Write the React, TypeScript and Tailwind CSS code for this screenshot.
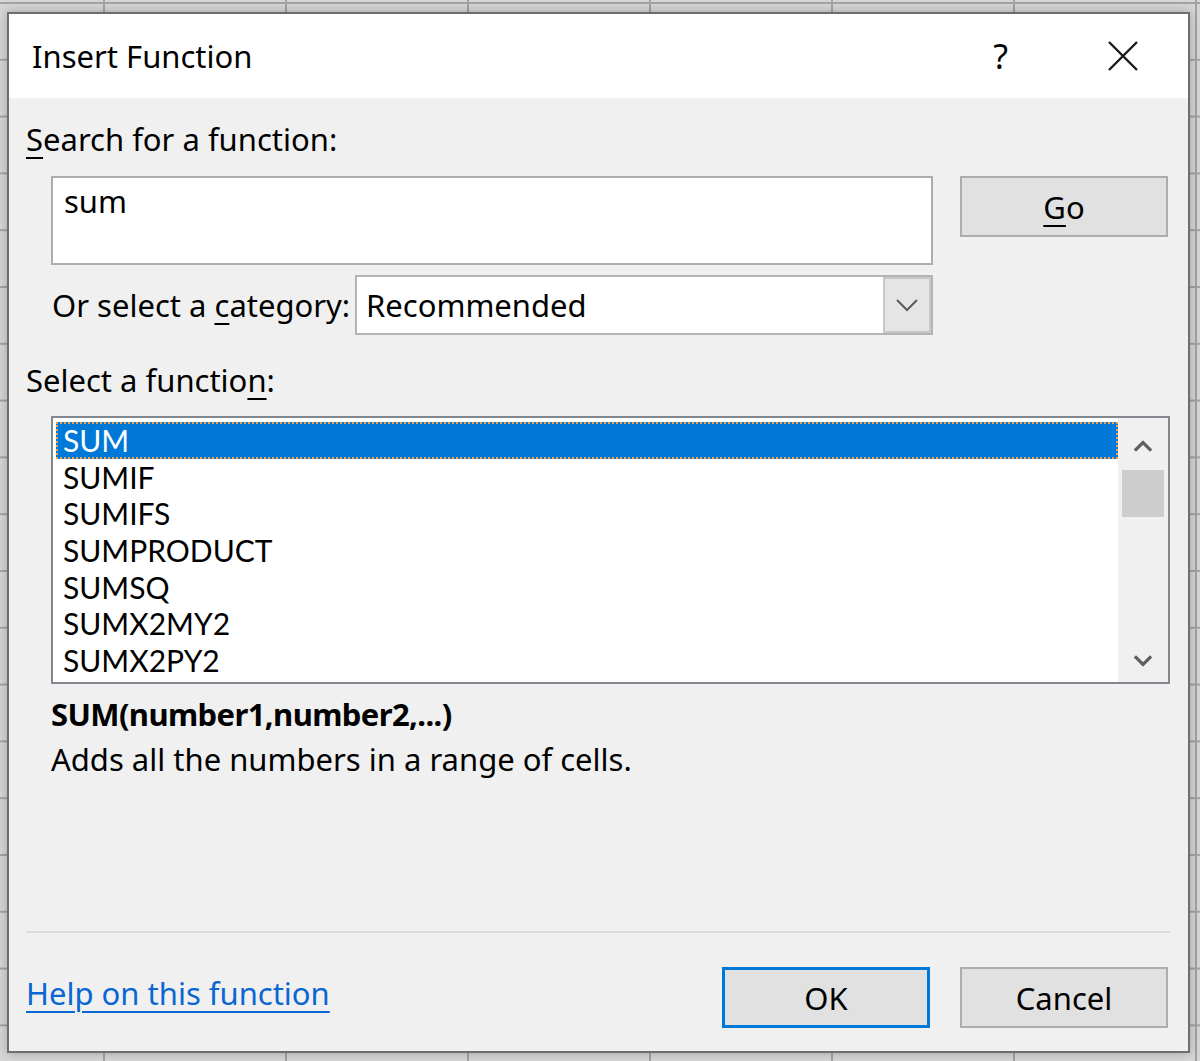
import { useState } from "react";

const FUNCS = ["SUM", "SUMIF", "SUMIFS", "SUMPRODUCT", "SUMSQ", "SUMX2MY2", "SUMX2PY2"];

function Chevron({ dir, className }: { dir: "up" | "down"; className?: string }) {
  return (
    <svg viewBox="0 0 20 12" className={className} fill="none" stroke="currentColor" strokeWidth={3.2} strokeLinecap="square">
      {dir === "up" ? <path d="M3 10 L10 3 L17 10" /> : <path d="M3 2 L10 9 L17 2" />}
    </svg>
  );
}

export default function App() {
  const [selected, setSelected] = useState(0);

  return (
    <div
      className="relative h-[1061px] w-[1200px] overflow-hidden bg-[#d6d6d6] pl-[7px] pt-[12px] [background-image:linear-gradient(to_right,#a3a3a3_2px,transparent_2px),linear-gradient(to_bottom,#a3a3a3_2px,transparent_2px)] [background-position:103px_2px] [background-size:182px_56.8px]"
      style={{ fontFamily: '"Noto Sans", "Open Sans", sans-serif' }}
    >
      <div className="flex h-[1041px] w-[1183px] flex-col border-2 border-[#6e6e6e] bg-[#f0f0f0] text-black shadow-[0_0_10px_rgba(0,0,0,0.25)]">
        {/* title bar */}
        <div className="flex h-[84px] shrink-0 items-center bg-white pl-[23px]">
          <span className="flex-1 text-[31px] leading-none">Insert Function</span>
          <span className="mr-[100px] text-[34px] leading-none">?</span>
          <svg viewBox="0 0 30 30" className="mr-[50px] h-[30px] w-[30px]" stroke="#1a1a1a" strokeWidth={2.4}>
            <path d="M1 1 L29 29 M29 1 L1 29" />
          </svg>
        </div>

        {/* body */}
        <div className="flex flex-1 flex-col pl-[17px] pr-[18px] text-[31px] leading-[34px]">
          <div className="mt-[24px] h-[34px]">
            <span className="underline decoration-2 underline-offset-[6px]">S</span>earch for a function:
          </div>

          <div className="mt-[20px] flex items-start">
            <div className="ml-[25px] h-[89px] w-[882px] border-2 border-[#adadad] bg-white px-[11px] pt-[6px]">
              sum
            </div>
            <button className="ml-[27px] flex h-[61px] w-[208px] items-center justify-center border-2 border-[#adadad] bg-[#e1e1e1]">
              <span className="underline decoration-2 underline-offset-[6px]">G</span>o
            </button>
          </div>

          <div className="mt-[10px] flex h-[60px] items-center">
            <span className="ml-[26px] w-[303px]">
              Or select a <span className="underline decoration-2 underline-offset-[6px]">c</span>ategory:
            </span>
            <div className="flex h-[60px] w-[578px] border-2 border-[#b4b4b4] bg-white">
              <span className="flex-1 pl-[9px] leading-[56px]">Recommended</span>
              <div className="flex w-[48px] items-center justify-center border-2 border-[#c8c8c8] bg-[#e5e5e5]">
                <svg viewBox="0 0 24 14" className="h-[14px] w-[24px]" fill="none" stroke="#5a5a5a" strokeWidth={2}>
                  <path d="M2 2 L12 12 L22 2" />
                </svg>
              </div>
            </div>
          </div>

          <div className="mt-[28px] h-[34px]">
            Select a functio<span className="underline decoration-2 underline-offset-[6px]">n</span>:
          </div>

          <div className="ml-[25px] mt-[19px] flex h-[268px] w-[1119px] border-2 border-[#828790] bg-white">
            <div className="flex-1 pl-[3px] pt-[4px] font-['Lato',sans-serif] text-[30px]">
              {FUNCS.map((f, i) => (
                <div
                  key={f}
                  onClick={() => setSelected(i)}
                  className={
                    i === selected
                      ? "flex h-[36.6px] items-center border-2 border-dotted border-[#f0a048] bg-[#0078d7] pl-[5px] leading-[32px] text-white"
                      : "flex h-[36.6px] items-center border-2 border-transparent pl-[5px] leading-[32px]"
                  }
                >
                  {f}
                </div>
              ))}
            </div>
            <div className="flex w-[50px] flex-col items-center bg-[#f0f0f0]">
              <Chevron dir="up" className="mt-[21px] h-[13px] w-[20px] text-[#606060]" />
              <div className="mt-[18px] h-[47px] w-[42px] bg-[#cdcdcd]" />
              <div className="flex-1" />
              <Chevron dir="down" className="mb-[14px] h-[13px] w-[20px] text-[#606060]" />
            </div>
          </div>

          <div className="ml-[25px] mt-[13px] h-[34px] font-bold tracking-[-0.6px]">SUM(number1,number2,...)</div>
          <div className="ml-[25px] mt-[11px] h-[34px]">Adds all the numbers in a range of cells.</div>

          <div className="mt-[155px] h-[2px] bg-[#dcdcdc]" />

          <div className="mt-[34px] flex items-center pr-[2px]">
            <div className="mb-[10px] flex-1">
              <a className="text-[#0a66d0] underline decoration-2 underline-offset-[6px]" href="#">
                Help on this function
              </a>
            </div>
            <button className="flex h-[61px] w-[208px] items-center justify-center border-[3px] border-[#0078d7] bg-[#e1e1e1]">
              OK
            </button>
            <button className="ml-[30px] flex h-[61px] w-[208px] items-center justify-center border-2 border-[#adadad] bg-[#e1e1e1]">
              Cancel
            </button>
          </div>
        </div>
      </div>
    </div>
  );
}
